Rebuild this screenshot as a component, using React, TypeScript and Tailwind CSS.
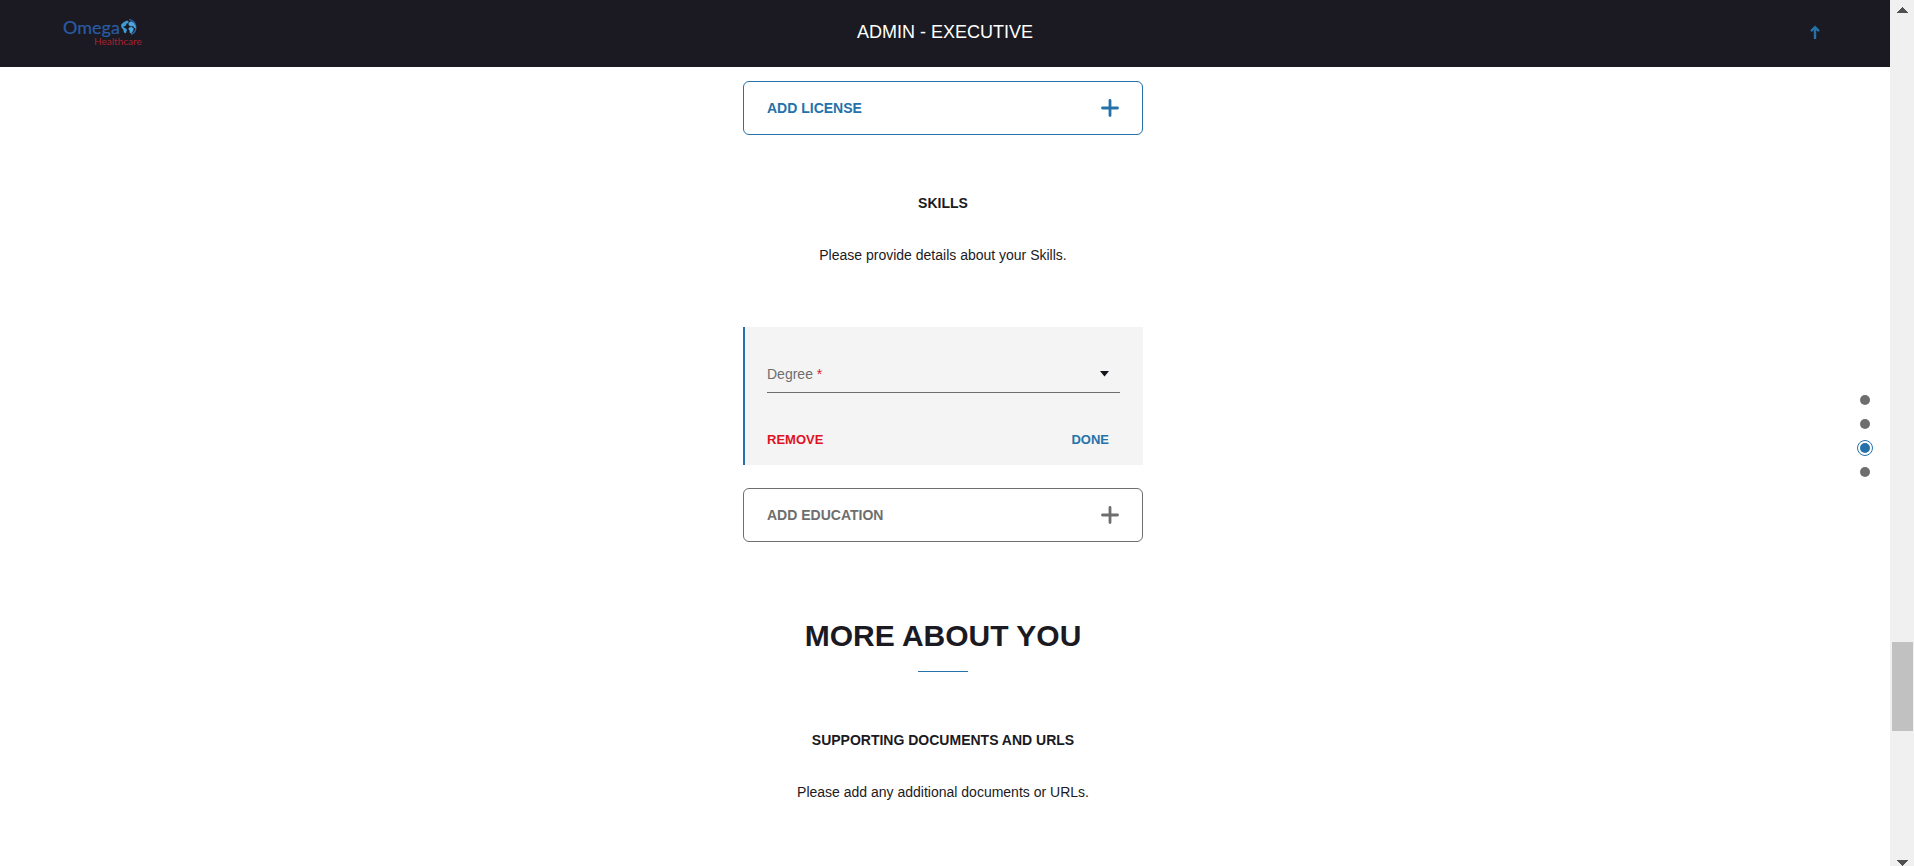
import React from "react";

function Logo() {
  return (
    <svg width="84" height="34" viewBox="0 0 84 34" role="img" aria-label="Omega Healthcare" className="block">
      <text x="1" y="18" fontFamily="Lato, sans-serif" fontSize="18" fill="#2a5ba3" stroke="#2a5ba3" strokeWidth="0.2">Omega</text>
      <text x="32" y="29" fontFamily="Lato, sans-serif" fontSize="10" fill="#a82130">Healthcare</text>
      <path d="M67 3.600a7.700 7.700 0 0 1 2 14.800" fill="none" stroke="#2d64a8" strokeWidth="1.300" />
      <path d="M59 8.800 61.500 6.200l3.500-1.800 1.600.8-.4 1.800-1.800.8-.2 1.400-1.800 1.200-1.400.4 1.600 1.200 2.200 1-.2 2.200-1 2.400-1.800-1.400-.4-2.400-2-2.200Z" fill="#3f9bd6" />
      <path d="m66.800 6.400 2.400-1.200 2.600 1.600 1.800 3.200.2 2.400-1.400-.4-1.400-2-1.600.6-1.800-.6-1.200-1.400ZM67 11.400l2.600-.4 2 1.200-.2 2.200-2.200 3.200-1.400-.8-.2-2.400-1.200-1.200Z" fill="#4aa6dd" />
    </svg>
  );
}

function Plus() {
  return (
    <svg width="18" height="18" viewBox="0 0 18 18" aria-hidden="true">
      <path d="M9 1.500v15M1.500 9h15" stroke="currentColor" strokeWidth="2.800" strokeLinecap="round" />
    </svg>
  );
}

function AddButton({ label, tone }: { label: string; tone: "blue" | "gray" }) {
  const color = tone === "blue" ? "border-[#2472a9] text-[#2472a9]" : "border-[#6e6e6e] text-[#6e6e6e]";
  return (
    <button type="button" className={`flex h-[54px] w-full items-center justify-between rounded-md border bg-white px-[23px] text-sm font-bold ${color}`}>
      {label}
      <Plus />
    </button>
  );
}

function SectionIntro({ title, text }: { title: string; text: string }) {
  return (
    <div className="flex flex-col gap-8 text-center text-sm">
      <h3 className="font-bold">{title}</h3>
      <p>{text}</p>
    </div>
  );
}

function SkillForm() {
  return (
    <form className="flex flex-col gap-9 border-l-2 border-[#2472a9] bg-[#f4f4f4] pt-[29px] pr-[23px] pb-[14px] pl-[22px]">
      <div className="grid items-center border-b border-[#6e6e6e] text-sm">
        <label htmlFor="degree" className="pointer-events-none col-start-1 row-start-1 text-[#6e6e6e]">
          Degree <span className="text-[#e21b2c]">*</span>
        </label>
        <select id="degree" required className="col-start-1 row-start-1 h-9 w-full appearance-none bg-transparent outline-none">
          <option value=""></option>
        </select>
        <svg width="9" height="6" viewBox="0 0 9 6" aria-hidden="true" className="pointer-events-none col-start-1 row-start-1 mr-[11px] justify-self-end">
          <path d="M0 0h9L4.500 5.500Z" fill="#15141a" />
        </svg>
      </div>
      <div className="flex justify-between pr-[11px] text-[13px] leading-[22px] font-bold">
        <button type="button" className="text-[#e0121f]">REMOVE</button>
        <button type="button" className="text-[#2472a9]">DONE</button>
      </div>
    </form>
  );
}

const steps = ["Personal", "Experience", "Education", "More about you"];

function StepDots({ current }: { current: number }) {
  return (
    <nav aria-label="Sections" className="fixed top-1/2 right-[41px] flex -translate-y-1/2 flex-col gap-2 pt-[6px]">
      {steps.map((step, i) => (
        <button
          key={step}
          type="button"
          aria-label={step}
          className={`flex size-4 items-center justify-center rounded-full border ${i === current ? "border-[#2472a9] text-[#2472a9]" : "border-transparent text-[#6e6e6e]"}`}
        >
          <span className="size-[10px] rounded-full bg-current" />
        </button>
      ))}
    </nav>
  );
}

function ScrollTrack() {
  return (
    <div aria-hidden="true" className="sticky top-0 flex h-screen w-6 shrink-0 flex-col items-center bg-[#f0f0f0] pt-[7px]">
      <svg width="12" height="6" viewBox="0 0 12 6" shapeRendering="crispEdges" className="shrink-0">
        <path d="M0 6 6 0l6 6Z" fill="#505050" />
      </svg>
      <div className="grow-[630]" />
      <div className="h-[89px] w-[21px] shrink-0 bg-[#c1c1c1]" />
      <div className="grow-[129]" />
      <svg width="12" height="6" viewBox="0 0 12 6" shapeRendering="crispEdges" className="shrink-0">
        <path d="M0 0h12L6 6Z" fill="#505050" />
      </svg>
    </div>
  );
}

export default function App() {
  return (
    <div className="flex min-h-screen bg-white font-['Liberation_Sans',Arial,sans-serif] text-[#1b1a22]">
      <div className="min-w-0 flex-1">
        <header className="grid h-[67px] grid-cols-3 items-start bg-[#1b1a22] px-[62px] pt-4">
          <Logo />
          <h1 className="text-center text-lg leading-8 text-white">ADMIN - EXECUTIVE</h1>
          <a href="#top" aria-label="Back to top" className="mt-[9px] mr-[6px] justify-self-end text-[#2472a9]">
            <svg width="14" height="14" viewBox="0 0 14 14" aria-hidden="true">
              <path d="M7 14V2.500M3 6.200 7 2.300l4 3.900" fill="none" stroke="currentColor" strokeWidth="2.400" />
            </svg>
          </a>
        </header>
        <main className="flex justify-center pt-[14px] pr-1">
          <div className="w-[400px]">
            <AddButton label="ADD LICENSE" tone="blue" />
            <section className="pt-[58px]">
              <SectionIntro title="SKILLS" text="Please provide details about your Skills." />
              <div className="flex flex-col gap-[23px] pt-[62px]">
                <SkillForm />
                <AddButton label="ADD EDUCATION" tone="gray" />
              </div>
            </section>
            <section className="pt-[76px]">
              <h2 className="text-center text-3xl font-bold">MORE ABOUT YOU</h2>
              <hr className="mx-auto mt-[17px] mb-[58px] w-[50px] border-[#2472a9]" />
              <SectionIntro title="SUPPORTING DOCUMENTS AND URLS" text="Please add any additional documents or URLs." />
            </section>
          </div>
        </main>
      </div>
      <StepDots current={2} />
      <ScrollTrack />
    </div>
  );
}
